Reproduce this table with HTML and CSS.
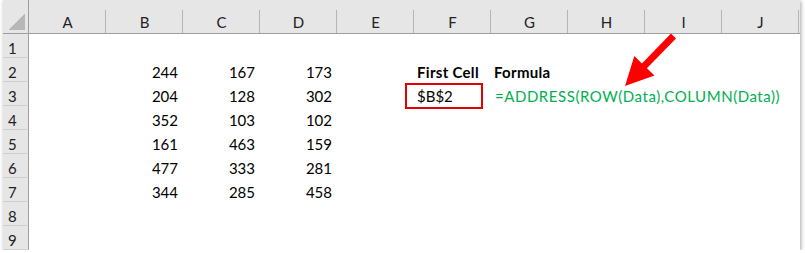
FILE: index.html
```html
<!DOCTYPE html>
<html lang="en">
<head>
  <meta charset="UTF-8" />
  <title>ADDRESS - first cell of a range</title>
  <link rel="stylesheet" href="styles.css">
</head>
<body>

  <div class="sheet">
    <!-- column letters -->
    <div class="head">
      <div class="corner"></div>
      <div class="colhead">A</div>
      <div class="colhead">B</div>
      <div class="colhead">C</div>
      <div class="colhead">D</div>
      <div class="colhead">E</div>
      <div class="colhead">F</div>
      <div class="colhead">G</div>
      <div class="colhead">H</div>
      <div class="colhead">I</div>
      <div class="colhead">J</div>
    </div>

    <!-- rows -->
    <div class="row"><div class="rh">1</div></div>
    <div class="row">
      <div class="rh">2</div>
      <div class="cell"></div>
      <div class="cell num">244</div>
      <div class="cell num">167</div>
      <div class="cell num">173</div>
      <div class="cell"></div>
      <div class="cell bold">First Cell</div>
      <div class="cell bold">Formula</div>
    </div>
    <div class="row">
      <div class="rh">3</div>
      <div class="cell"></div>
      <div class="cell num">204</div>
      <div class="cell num">128</div>
      <div class="cell num">302</div>
      <div class="cell"></div>
      <div class="cell">$B$2</div>
      <div class="cell formula">=ADDRESS(ROW(Data),COLUMN(Data))</div>
    </div>
    <div class="row">
      <div class="rh">4</div>
      <div class="cell"></div>
      <div class="cell num">352</div>
      <div class="cell num">103</div>
      <div class="cell num">102</div>
    </div>
    <div class="row">
      <div class="rh">5</div>
      <div class="cell"></div>
      <div class="cell num">161</div>
      <div class="cell num">463</div>
      <div class="cell num">159</div>
    </div>
    <div class="row">
      <div class="rh">6</div>
      <div class="cell"></div>
      <div class="cell num">477</div>
      <div class="cell num">333</div>
      <div class="cell num">281</div>
    </div>
    <div class="row">
      <div class="rh">7</div>
      <div class="cell"></div>
      <div class="cell num">344</div>
      <div class="cell num">285</div>
      <div class="cell num">458</div>
    </div>
    <div class="row"><div class="rh">8</div></div>
    <div class="row"><div class="rh">9</div></div>

    <!-- callouts drawn over the grid -->
    <div class="mark"></div>
    <svg class="arrow" width="805" height="253" viewBox="0 0 805 253">
      <polygon fill="#f00" points="625,86 654.5,75.5 646.9,68.2 676,38.4 671,33.6 641.9,63.4 634.3,56.1"/>
    </svg>
  </div>

</body>
</html>
```

FILE: styles.css
```css
html, body {
  margin: 0;
  padding: 0;
  background: #fff;
}

body {
  padding-left: 3px;
  font-family: Lato, "Liberation Sans", sans-serif;
  font-size: 15px;
  color: #000;
}

.sheet {
  position: relative;
  width: 797px;
  height: 250px;
  background: #fff;
  box-shadow: 1px 1px 4px rgba(0, 0, 0, 0.35);
}

/* header strip with column letters */
.head {
  display: flex;
  height: 34px;
  box-sizing: border-box;
  background: #e6e6e6;
  border-bottom: 1px solid #9e9e9e;
}

.corner {
  width: 26px;
  flex: none;
  box-sizing: border-box;
  border-right: 1px solid #9e9e9e;
  /* select-all triangle */
  background: linear-gradient(to bottom right, transparent 50%, #b7b7b7 50%) right 3px bottom 3px / 17px 16px no-repeat;
}

.colhead {
  width: 77px;
  flex: none;
  padding-top: 10px;
  line-height: 24px;
  text-align: center;
  color: #222;
  background: linear-gradient(#b5b5b5, #b5b5b5) right bottom / 1px 23px no-repeat;
}

/* grid rows */
.row {
  display: flex;
  height: 24px;
}

.rh {
  width: 26px;
  flex: none;
  box-sizing: border-box;
  padding: 3px 0 0 5px;
  line-height: 22px;
  color: #222;
  background: #e6e6e6;
  border-right: 1px solid #9e9e9e;
  border-bottom: 1px solid #cfcfcf;
}

.cell {
  width: 77px;
  flex: none;
  box-sizing: border-box;
  padding: 3px 5px 0 3px;
  line-height: 22px;
  white-space: nowrap;
}

.num {
  text-align: right;
}

.bold {
  font-weight: bold;
  letter-spacing: 0.3px;
}

.formula {
  padding-left: 4px;
  letter-spacing: 0.55px;
  color: #00b050;
}

/* red box around the result */
.mark {
  position: absolute;
  left: 402px;
  top: 83px;
  width: 78px;
  height: 26px;
  box-sizing: border-box;
  border: 2px solid #e60000;
}

.arrow {
  position: absolute;
  left: -3px;
  top: 0;
  pointer-events: none;
}
```
